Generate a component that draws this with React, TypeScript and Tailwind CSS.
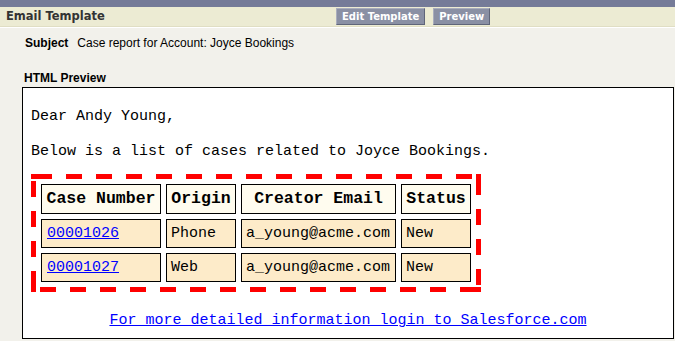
import React from 'react';

const cases = [
  { num: '00001026', origin: 'Phone', email: 'a_young@acme.com', status: 'New' },
  { num: '00001027', origin: 'Web', email: 'a_young@acme.com', status: 'New' },
];

const columns = [
  { label: 'Case Number', w: 'w-[120px]' },
  { label: 'Origin', w: 'w-[70px]' },
  { label: 'Creator Email', w: 'w-[155px]' },
  { label: 'Status', w: 'w-[70px]' },
];

const mono = "font-['Liberation_Mono','Courier_New',monospace]";

function Button({ label }: { label: string }) {
  return (
    <button className="h-[17px] px-[5px] bg-[#8a90a4] border border-t-[#a9adbd] border-l-[#a9adbd] border-b-[#5f6579] border-r-[#5f6579] text-white text-[10px] font-bold leading-[15px] font-['DejaVu_Sans',sans-serif]">
      {label}
    </button>
  );
}

// red dashed highlight drawn round the table (450 x 118)
function DashedFrame() {
  return (
    <svg className="absolute inset-0 pointer-events-none" width="450" height="118" viewBox="0 0 450 118">
      <g stroke="#ff0000" strokeWidth="5" strokeDasharray="16 14" fill="none">
        <path d="M5 2.5 H445" />
        <path d="M447.5 5 V113" />
        <path d="M445 115.5 H5" />
        <path d="M2.5 113 V5" />
      </g>
      <g fill="#ff0000">
        <rect x="0" y="0" width="5" height="5" />
        <rect x="445" y="0" width="5" height="5" />
        <rect x="445" y="113" width="5" height="5" />
        <rect x="0" y="113" width="5" height="5" />
      </g>
    </svg>
  );
}

export default function App() {
  return (
    <div className="w-[675px] h-[341px] overflow-hidden bg-[#f2f1eb] font-['Liberation_Sans',Arial,sans-serif] text-black">
      <div className="h-[7px] bg-[#757b98]" />
      <div className="h-[20px] flex items-start bg-[#ecebd3] border-b border-[#e0dec4]">
        <div className="w-[336px] pl-[6px] h-[19px] flex items-center text-[11.5px] font-bold text-[#333] font-['DejaVu_Sans',sans-serif]">
          Email Template
        </div>
        <div className="flex gap-[8px] pt-[1px]">
          <Button label="Edit Template" />
          <Button label="Preview" />
        </div>
      </div>
      <div className="h-px bg-white" />

      <div className="mt-[8px] pl-[25px] flex gap-[9px] text-[12px] leading-[14px]">
        <span className="font-bold">Subject</span>
        <span>Case report for Account: Joyce Bookings</span>
      </div>
      <div className="mt-[21px] mb-[2px] pl-[24px] text-[12px] leading-[14px] font-bold">HTML Preview</div>

      <div className={`ml-[22px] w-[652px] h-[252px] border border-black bg-white pt-[20px] pl-[8px] text-[15px] leading-[17px] ${mono}`}>
        <div>Dear Andy Young,</div>
        <div className="mt-[18px]">Below is a list of cases related to Joyce Bookings.</div>

        <div className="relative mt-[14px] w-[450px] h-[118px]">
          <table className="table-fixed w-[450px] border-separate border-spacing-[5px] border-[5px] border-transparent">
            <thead>
              <tr>
                {columns.map((c) => (
                  <th key={c.label} className={`${c.w} h-[30px] border border-black bg-[#fffcef] px-[4px] py-0 text-[16.5px] leading-[18px] font-bold text-center whitespace-nowrap`}>
                    {c.label}
                  </th>
                ))}
              </tr>
            </thead>
            <tbody>
              {cases.map((c) => (
                <tr key={c.num}>
                  <td className="h-[29px] border border-black bg-[#fdebc9] px-[5px] py-0 whitespace-nowrap">
                    <a href="#" className="text-[#0000ff] underline">{c.num}</a>
                  </td>
                  <td className="h-[29px] border border-black bg-[#fdebc9] px-[4px] py-0 whitespace-nowrap">{c.origin}</td>
                  <td className="h-[29px] border border-black bg-[#fdebc9] px-[4px] py-0 whitespace-nowrap">{c.email}</td>
                  <td className="h-[29px] border border-black bg-[#fdebc9] px-[4px] py-0 whitespace-nowrap">{c.status}</td>
                </tr>
              ))}
            </tbody>
          </table>
          <DashedFrame />
        </div>

        <div className="mt-[20px] pr-[8px] text-center">
          <a href="#" className="text-[#0000ff] underline">For more detailed information login to Salesforce.com</a>
        </div>
      </div>
    </div>
  );
}
